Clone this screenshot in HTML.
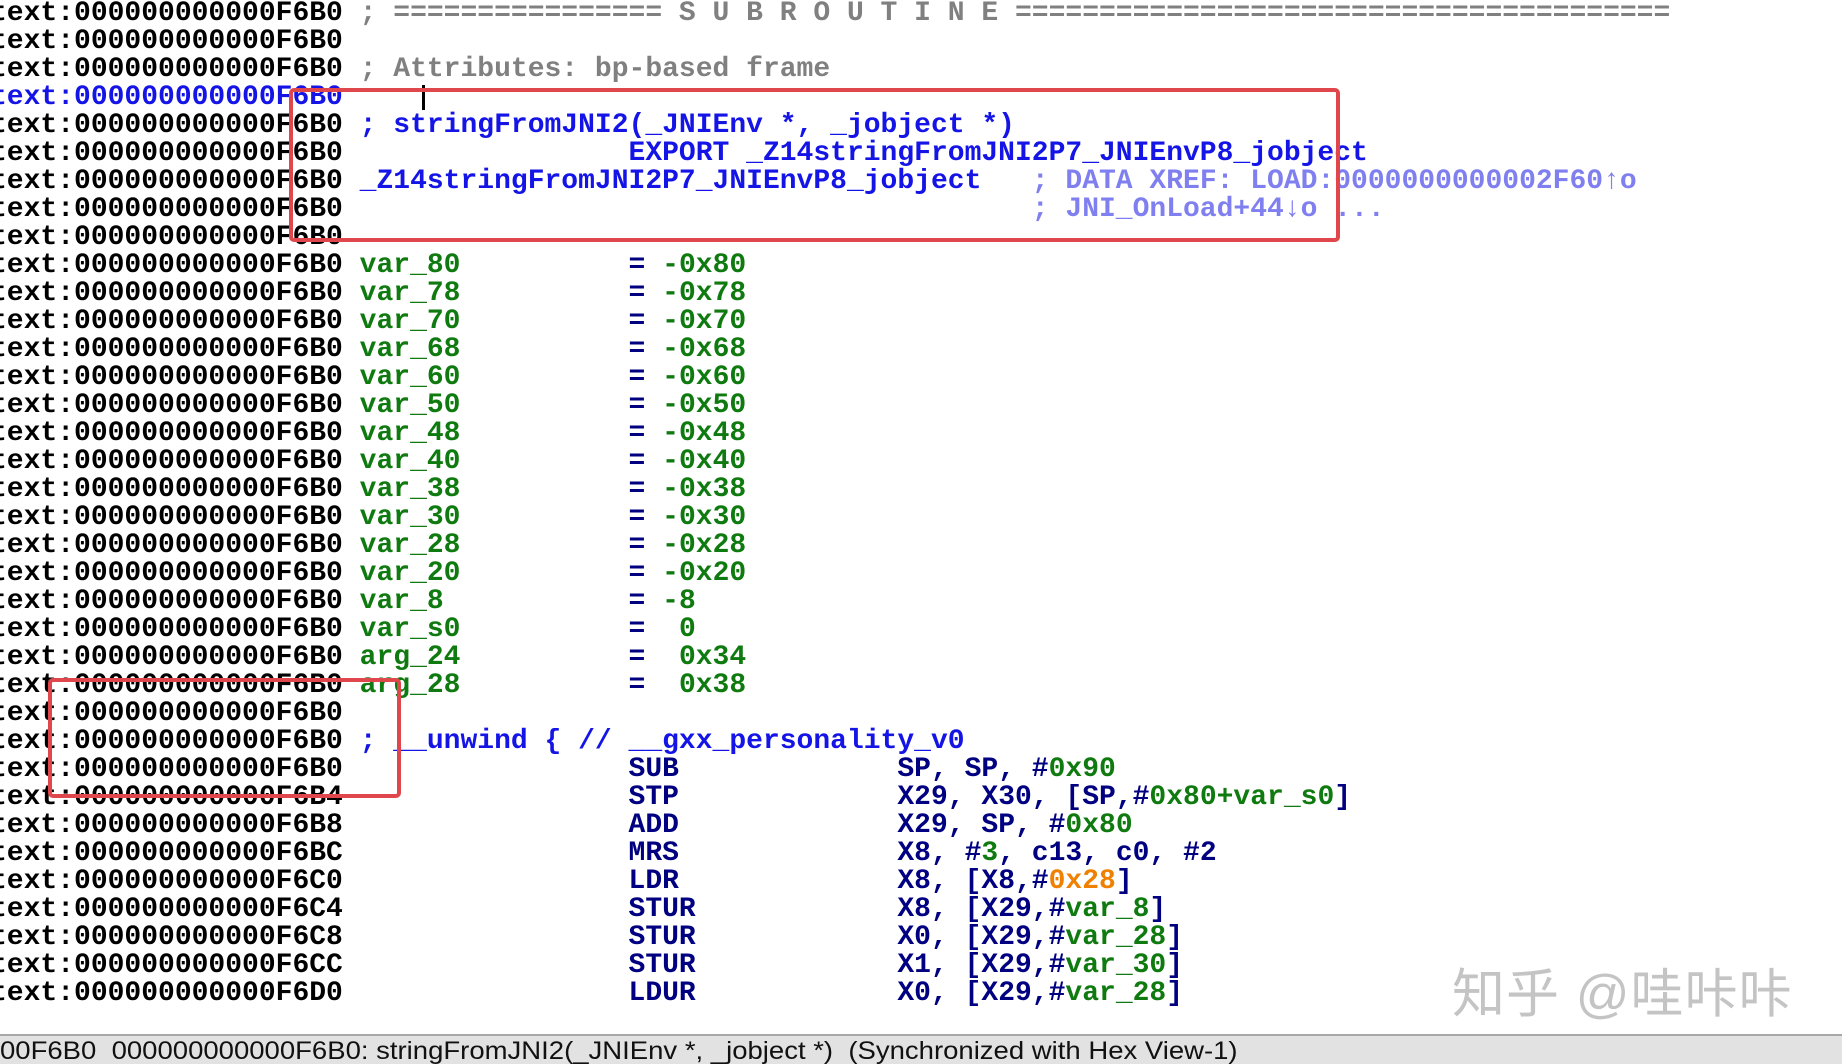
<!DOCTYPE html>
<html><head><meta charset="utf-8"><style>
html,body{margin:0;padding:0;background:#fff;width:1842px;height:1064px;overflow:hidden;position:relative}
pre{position:absolute;left:-10px;top:0px;margin:0;font-family:"Liberation Mono",monospace;font-weight:bold;font-size:28px;line-height:28px;color:#000;white-space:pre}
.g{color:#808080}.b{color:#1414e6}.n{color:#000080}.v{color:#0f7a0f}.x{color:#7f7ff0}.o{color:#f08000}
.box{position:absolute;border:4px solid #e0474c;border-radius:5px}
#cur{position:absolute;left:422px;top:85px;width:3px;height:25px;background:#000}
#st{position:absolute;left:0;top:1034px;width:1842px;height:30px;background:#e2e2e2;border-top:2px solid #a8a8a8;overflow:hidden}
#st span{display:block;font-family:"Liberation Sans",sans-serif;font-size:25px;line-height:30px;color:#111;white-space:pre;transform:scaleX(1.1);transform-origin:0 0}
#wm{position:absolute;left:1452px;top:952px;font-family:"Liberation Sans","Noto Sans CJK SC",sans-serif;font-size:53px;color:#c4c4c4;letter-spacing:1px}
</style></head><body>
<pre>text:000000000000F6B0 <span class="g">; ================ S U B R O U T I N E =======================================</span>
text:000000000000F6B0
text:000000000000F6B0 <span class="g">; Attributes: bp-based frame</span>
<span class="b">text:000000000000F6B0</span>
text:000000000000F6B0 <span class="b">; stringFromJNI2(_JNIEnv *, _jobject *)</span>
text:000000000000F6B0                 <span class="b">EXPORT _Z14stringFromJNI2P7_JNIEnvP8_jobject</span>
text:000000000000F6B0 <span class="b">_Z14stringFromJNI2P7_JNIEnvP8_jobject</span>   <span class="x">; DATA XREF: LOAD:0000000000002F60↑o</span>
text:000000000000F6B0                                         <span class="x">; JNI_OnLoad+44↓o ...</span>
text:000000000000F6B0
text:000000000000F6B0 <span class="v">var_80</span>          <span class="n">=</span> <span class="v">-0x80</span>
text:000000000000F6B0 <span class="v">var_78</span>          <span class="n">=</span> <span class="v">-0x78</span>
text:000000000000F6B0 <span class="v">var_70</span>          <span class="n">=</span> <span class="v">-0x70</span>
text:000000000000F6B0 <span class="v">var_68</span>          <span class="n">=</span> <span class="v">-0x68</span>
text:000000000000F6B0 <span class="v">var_60</span>          <span class="n">=</span> <span class="v">-0x60</span>
text:000000000000F6B0 <span class="v">var_50</span>          <span class="n">=</span> <span class="v">-0x50</span>
text:000000000000F6B0 <span class="v">var_48</span>          <span class="n">=</span> <span class="v">-0x48</span>
text:000000000000F6B0 <span class="v">var_40</span>          <span class="n">=</span> <span class="v">-0x40</span>
text:000000000000F6B0 <span class="v">var_38</span>          <span class="n">=</span> <span class="v">-0x38</span>
text:000000000000F6B0 <span class="v">var_30</span>          <span class="n">=</span> <span class="v">-0x30</span>
text:000000000000F6B0 <span class="v">var_28</span>          <span class="n">=</span> <span class="v">-0x28</span>
text:000000000000F6B0 <span class="v">var_20</span>          <span class="n">=</span> <span class="v">-0x20</span>
text:000000000000F6B0 <span class="v">var_8</span>           <span class="n">=</span> <span class="v">-8</span>
text:000000000000F6B0 <span class="v">var_s0</span>          <span class="n">=</span>  <span class="v">0</span>
text:000000000000F6B0 <span class="v">arg_24</span>          <span class="n">=</span>  <span class="v">0x34</span>
text:000000000000F6B0 <span class="v">arg_28</span>          <span class="n">=</span>  <span class="v">0x38</span>
text:000000000000F6B0
text:000000000000F6B0 <span class="b">; __unwind { // __gxx_personality_v0</span>
text:000000000000F6B0                 <span class="n">SUB</span>             <span class="n">SP, SP, #</span><span class="v">0x90</span>
text:000000000000F6B4                 <span class="n">STP</span>             <span class="n">X29, X30, [SP,#</span><span class="v">0x80+var_s0</span><span class="n">]</span>
text:000000000000F6B8                 <span class="n">ADD</span>             <span class="n">X29, SP, #</span><span class="v">0x80</span>
text:000000000000F6BC                 <span class="n">MRS</span>             <span class="n">X8, #</span><span class="v">3</span><span class="n">, c13, c0, #2</span>
text:000000000000F6C0                 <span class="n">LDR</span>             <span class="n">X8, [X8,#</span><span class="o">0x28</span><span class="n">]</span>
text:000000000000F6C4                 <span class="n">STUR</span>            <span class="n">X8, [X29,#</span><span class="v">var_8</span><span class="n">]</span>
text:000000000000F6C8                 <span class="n">STUR</span>            <span class="n">X0, [X29,#</span><span class="v">var_28</span><span class="n">]</span>
text:000000000000F6CC                 <span class="n">STUR</span>            <span class="n">X1, [X29,#</span><span class="v">var_30</span><span class="n">]</span>
text:000000000000F6D0                 <span class="n">LDUR</span>            <span class="n">X0, [X29,#</span><span class="v">var_28</span><span class="n">]</span>
</pre>
<div id="cur"></div>
<div class="box" style="left:289px;top:88px;width:1043px;height:146px"></div>
<div class="box" style="left:48px;top:678px;width:345px;height:112px"></div>
<div id="wm">知乎 @哇咔咔</div>
<div id="st"><span>00F6B0  000000000000F6B0: stringFromJNI2(_JNIEnv *, _jobject *)  (Synchronized with Hex View-1)</span></div>
</body></html>
